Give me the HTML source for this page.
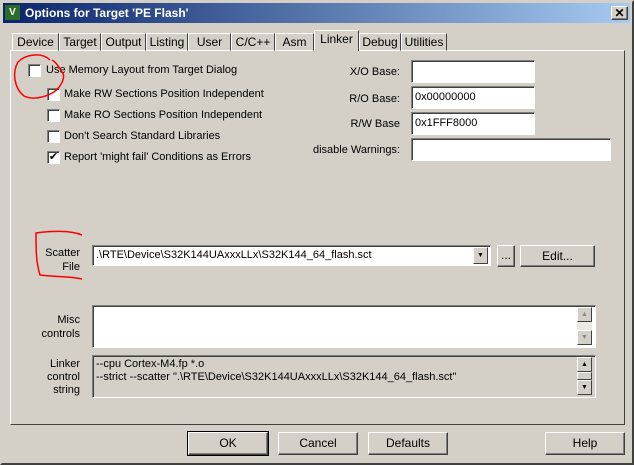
<!DOCTYPE html><html><head><style>
*{box-sizing:border-box;margin:0;padding:0}
body{width:634px;height:465px;background:#d4d0c8;font:11px "Liberation Sans",sans-serif;color:#000;position:relative;overflow:hidden}
.a{position:absolute}
.title{left:3px;top:3px;width:627px;height:20px;background:linear-gradient(90deg,#0a246a,#a6caf0);color:#fff;font-weight:bold;font-size:12px;line-height:20px;padding-left:22px}
.tab{position:absolute;top:33px;height:18px;border:1px solid;border-color:#fff #404040 transparent #fff;line-height:16px;text-align:center;font-size:12px}
.panel{left:10px;top:50px;width:615px;height:375px;border:1px solid;border-color:#fff #404040 #404040 #fff}
.cb{position:absolute;width:13px;height:13px;background:#fff;border:1px solid;border-color:#808080 #fff #fff #808080;box-shadow:inset 1px 1px #404040}
.in{position:absolute;background:#fff;border:1px solid;border-color:#808080 #fff #fff #808080;box-shadow:inset 1px 1px #404040;padding:4px 0 0 3px;font-size:11px}
.btn{position:absolute;border:1px solid;border-color:#fff #404040 #404040 #fff;box-shadow:inset -1px -1px #808080;text-align:center;font-size:12px;background:#d4d0c8}
.lbl{position:absolute;font-size:11px;text-align:right}
.t{position:absolute;font-size:11px}
.sb{position:absolute;width:15px;height:15px;border:1px solid;border-color:#fff #404040 #404040 #fff;background:#d4d0c8;font-size:7px;text-align:center;line-height:13px}
</style></head><body>
<div class="a" style="left:0;top:0;width:634px;height:465px;border:2px solid;border-color:#d4d0c8 #404040 #404040 #d4d0c8"></div>
<div class="a title">Options for Target 'PE Flash'</div>
<div class="a" style="left:5px;top:5px;width:15px;height:15px;background:#2b6b2b;color:#fff;font-size:10px;font-weight:bold;text-align:center;line-height:15px">V</div>
<div class="btn" style="left:611px;top:6px;width:17px;height:14px;line-height:12px;font-weight:bold;font-size:12px">✕</div>
<div class="a panel"></div>
<div class="tab" style="left:12px;width:47px">Device</div>
<div class="tab" style="left:59px;width:42px">Target</div>
<div class="tab" style="left:101px;width:45px">Output</div>
<div class="tab" style="left:146px;width:42px">Listing</div>
<div class="tab" style="left:188px;width:43px">User</div>
<div class="tab" style="left:231px;width:44px">C/C++</div>
<div class="tab" style="left:275px;width:39px">Asm</div>
<div class="tab" style="left:314px;top:30px;height:21px;width:45px;background:#d4d0c8;border-bottom:none">Linker</div>
<div class="tab" style="left:359px;width:42px">Debug</div>
<div class="tab" style="left:401px;width:46px">Utilities</div>

<div class="cb" style="left:28px;top:64px"></div><div class="t" style="left:46px;top:64px">Use Memory Layout from Target Dialog</div>
<div class="cb" style="left:47px;top:88px"></div><div class="t" style="left:64px;top:88px">Make RW Sections Position Independent</div>
<div class="cb" style="left:47px;top:109px"></div><div class="t" style="left:64px;top:109px">Make RO Sections Position Independent</div>
<div class="cb" style="left:47px;top:130px"></div><div class="t" style="left:64px;top:130px">Don't Search Standard Libraries</div>
<div class="cb" style="left:47px;top:151px;font-size:11px;line-height:10px;text-align:center">✔</div><div class="t" style="left:64px;top:151px">Report 'might fail' Conditions as Errors</div>

<div class="lbl" style="left:300px;width:100px;top:66px">X/O Base:</div>
<div class="lbl" style="left:300px;width:100px;top:93px">R/O Base:</div>
<div class="lbl" style="left:300px;width:100px;top:118px">R/W Base</div>
<div class="lbl" style="left:280px;width:120px;top:144px">disable Warnings:</div>
<div class="in" style="left:411px;top:60px;width:124px;height:23px"></div>
<div class="in" style="left:411px;top:86px;width:124px;height:23px">0x00000000</div>
<div class="in" style="left:411px;top:112px;width:124px;height:23px">0x1FFF8000</div>
<div class="in" style="left:411px;top:138px;width:200px;height:23px"></div>

<div class="lbl" style="left:30px;width:50px;top:246px;line-height:14px">Scatter<br>File</div>
<div class="in" style="left:92px;top:245px;width:399px;height:21px;padding-top:3px">.\RTE\Device\S32K144UAxxxLLx\S32K144_64_flash.sct</div>
<div class="sb" style="left:473px;top:247px;height:17px;line-height:15px">▼</div>
<div class="btn" style="left:497px;top:245px;width:18px;height:22px;line-height:18px">...</div>
<div class="btn" style="left:520px;top:245px;width:75px;height:22px;line-height:20px">Edit...</div>

<div class="lbl" style="left:20px;width:60px;top:313px;line-height:14px">Misc<br>controls</div>
<div class="in" style="left:92px;top:305px;width:504px;height:43px"></div>
<div class="sb" style="left:577px;top:307px;color:#888">▲</div>
<div class="a" style="left:577px;top:322px;width:15px;height:8px;background:#ebe9e4"></div>
<div class="sb" style="left:577px;top:330px;color:#888">▼</div>

<div class="lbl" style="left:20px;width:60px;top:358px;line-height:13px">Linker<br>control<br>string</div>
<div class="in" style="left:92px;top:355px;width:504px;height:43px;background:#d4d0c8;line-height:13px;padding-top:2px">--cpu Cortex-M4.fp *.o<br>--strict --scatter ".\RTE\Device\S32K144UAxxxLLx\S32K144_64_flash.sct"</div>
<div class="sb" style="left:577px;top:357px">▲</div>
<div class="sb" style="left:577px;top:372px;height:8px"></div>
<div class="sb" style="left:577px;top:380px">▼</div>

<div class="btn" style="left:188px;top:432px;width:80px;height:23px;line-height:21px;outline:1px solid #000">OK</div>
<div class="btn" style="left:278px;top:432px;width:80px;height:23px;line-height:21px">Cancel</div>
<div class="btn" style="left:368px;top:432px;width:80px;height:23px;line-height:21px">Defaults</div>
<div class="btn" style="left:545px;top:432px;width:80px;height:23px;line-height:21px">Help</div>

<svg class="a" style="left:0;top:0" width="634" height="465" fill="none" stroke="#f00" stroke-width="1.5">
<path d="M50 60 C42 52 26 54 18 62 C12 72 14 88 24 96 C32 100 44 98 54 92 C62 86 66 76 62 72 C58 66 56 62 52 60"/>
<path d="M82 235 C70 230 50 231 36 233 C36 250 36 262 40 275 C54 277 70 276 82 279"/>
</svg>
</body></html>
